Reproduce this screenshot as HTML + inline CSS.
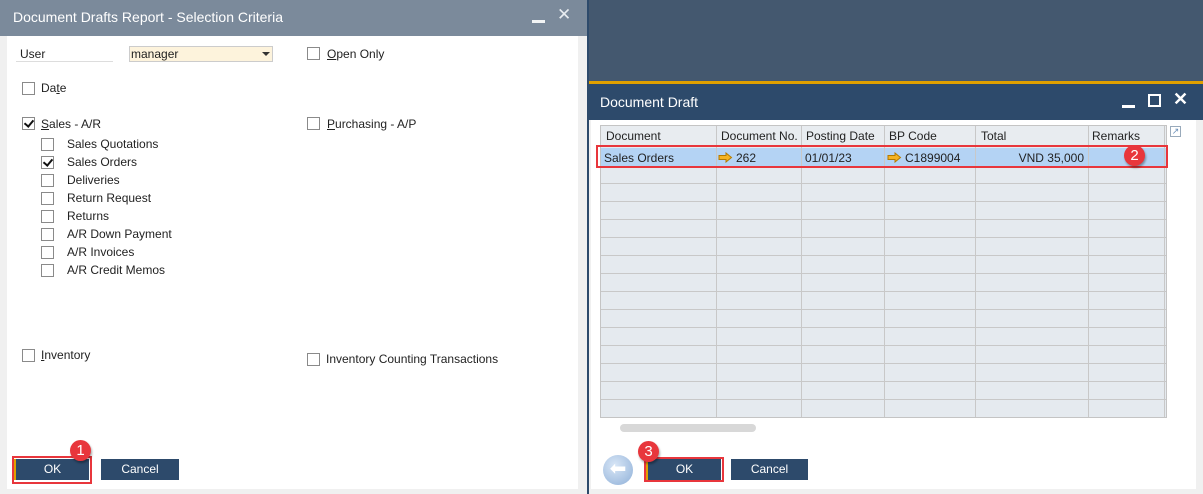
<!DOCTYPE html>
<html><head><meta charset="utf-8"><style>
*{margin:0;padding:0;box-sizing:border-box}
body{width:1203px;height:494px;position:relative;overflow:hidden;font-family:"Liberation Sans",sans-serif;font-size:12px;color:#222;background:#f0f0f0}
.a{position:absolute;white-space:nowrap}
.cb{position:absolute;width:13px;height:13px;border:1px solid #8a8a8a;background:#fff}
.ck::after{content:"";position:absolute;left:3px;top:0px;width:4px;height:7px;border:solid #111;border-width:0 2px 2px 0;transform:rotate(40deg)}
.lbl{position:absolute;white-space:nowrap;font-size:12px}
.btn{position:absolute;background:#2d4a6b;color:#fff;text-align:center;font-size:12px;line-height:21px;height:21px}
.badge{position:absolute;width:21px;height:21px;border-radius:50%;background:#e8363c;color:#fff;font-size:15px;text-align:center;line-height:21px;box-shadow:1px 2px 2px rgba(0,0,0,.35)}
.red{position:absolute;border:2px solid #e8363c}
.hl{position:absolute;top:0;height:100%;width:1px;background:#c8c8c8}
</style></head><body>
<!-- left window -->
<div class="a" style="left:0;top:0;width:587px;height:36px;background:#7b8a9b"></div>
<div class="a" style="left:13px;top:9px;color:#fff;font-size:14px">Document Drafts Report - Selection Criteria</div>
<div class="a" style="left:532px;top:20px;width:13px;height:3px;background:#fff;opacity:.9"></div>
<div class="a" style="left:557px;top:5px;color:#e8ecf0;font-size:17px">✕</div>
<div class="a" style="left:7px;top:36px;width:571px;height:453px;background:#fff"></div>
<div class="a" style="left:587px;top:0;width:2px;height:494px;background:#2d4a6b"></div>
<div class="lbl" style="left:20px;top:47px">User</div>
<div class="a" style="left:16px;top:61px;width:97px;height:1px;background:#ddd"></div>
<div class="a" style="left:129px;top:46px;width:144px;height:16px;background:#fdf3dc;border:1px solid #ccc"></div>
<div class="lbl" style="left:131px;top:47px">manager</div>
<div class="a" style="left:262px;top:52px;width:0;height:0;border-left:4px solid transparent;border-right:4px solid transparent;border-top:4px solid #333"></div>
<div class="cb" style="left:307px;top:47px"></div><div class="lbl" style="left:327px;top:47px"><u>O</u>pen Only</div>
<div class="cb" style="left:22px;top:82px"></div><div class="lbl" style="left:41px;top:81px">Da<u>t</u>e</div>
<div class="cb ck" style="left:22px;top:117px"></div><div class="lbl" style="left:41px;top:117px"><u>S</u>ales - A/R</div>
<div class="cb" style="left:307px;top:117px"></div><div class="lbl" style="left:327px;top:117px"><u>P</u>urchasing - A/P</div>
<div class="cb" style="left:41px;top:138px"></div><div class="lbl" style="left:67px;top:137px">Sales Quotations</div>
<div class="cb ck" style="left:41px;top:156px"></div><div class="lbl" style="left:67px;top:155px">Sales Orders</div>
<div class="cb" style="left:41px;top:174px"></div><div class="lbl" style="left:67px;top:173px">Deliveries</div>
<div class="cb" style="left:41px;top:192px"></div><div class="lbl" style="left:67px;top:191px">Return Request</div>
<div class="cb" style="left:41px;top:210px"></div><div class="lbl" style="left:67px;top:209px">Returns</div>
<div class="cb" style="left:41px;top:228px"></div><div class="lbl" style="left:67px;top:227px">A/R Down Payment</div>
<div class="cb" style="left:41px;top:246px"></div><div class="lbl" style="left:67px;top:245px">A/R Invoices</div>
<div class="cb" style="left:41px;top:264px"></div><div class="lbl" style="left:67px;top:263px">A/R Credit Memos</div>
<div class="cb" style="left:22px;top:349px"></div><div class="lbl" style="left:41px;top:348px"><u>I</u>nventory</div>
<div class="cb" style="left:307px;top:353px"></div><div class="lbl" style="left:326px;top:352px">Inventory Counting Transactions</div>
<div class="btn" style="left:14px;top:459px;width:75px;border-left:2px solid #e0a000">OK</div>
<div class="red" style="left:12px;top:456px;width:80px;height:28px"></div>
<div class="btn" style="left:101px;top:459px;width:78px">Cancel</div>
<div class="badge" style="left:70px;top:440px">1</div>
<!-- right side -->
<div class="a" style="left:589px;top:0;width:614px;height:81px;background:#44586f"></div>
<div class="a" style="left:589px;top:81px;width:614px;height:3px;background:#e0a000"></div>
<div class="a" style="left:589px;top:84px;width:614px;height:36px;background:#2d4a6b"></div>
<div class="a" style="left:600px;top:94px;color:#fff;font-size:14px">Document Draft</div>
<div class="a" style="left:1122px;top:105px;width:13px;height:3px;background:#fff"></div>
<div class="a" style="left:1148px;top:94px;width:13px;height:13px;border:2px solid #fff"></div>
<div class="a" style="left:1173px;top:89px;color:#fff;font-size:18px;font-weight:bold">✕</div>
<div class="a" style="left:591px;top:120px;width:605px;height:369px;background:#fff"></div>
<!-- grid -->
<div class="a" style="left:600px;top:125px;width:567px;height:293px;background:#e5eaef;border:1px solid #c4c4c4;background-image:repeating-linear-gradient(to bottom,transparent 0,transparent 17px,#c8c8c8 17px,#c8c8c8 18px);background-position:0 40px;overflow:hidden">
<div class="a" style="left:0;top:0;width:567px;height:21px;background:#e8ecf0;border-bottom:1px solid #c4c4c4"></div>
<div class="a" style="left:0;top:22px;width:567px;height:19px;background:#b4d3f4"></div>
<div class="hl" style="left:115px"></div><div class="hl" style="left:200px"></div><div class="hl" style="left:283px"></div><div class="hl" style="left:374px"></div><div class="hl" style="left:487px"></div><div class="hl" style="left:563px"></div>
<div class="a" style="left:5px;top:3px">Document</div>
<div class="a" style="left:120px;top:3px">Document No.</div>
<div class="a" style="left:205px;top:3px">Posting Date</div>
<div class="a" style="left:288px;top:3px">BP Code</div>
<div class="a" style="left:380px;top:3px">Total</div>
<div class="a" style="left:491px;top:3px">Remarks</div>
<div class="a" style="left:3px;top:25px">Sales Orders</div>
<svg class="a" style="left:117px;top:26px" width="15" height="11" viewBox="0 0 15 11"><path d="M1 3.5h7V1l5.5 4.5L8 10V7.5H1z" fill="#f5b321" stroke="#b37a00" stroke-width="1"/></svg>
<div class="a" style="left:135px;top:25px">262</div>
<div class="a" style="left:204px;top:25px">01/01/23</div>
<svg class="a" style="left:286px;top:26px" width="15" height="11" viewBox="0 0 15 11"><path d="M1 3.5h7V1l5.5 4.5L8 10V7.5H1z" fill="#f5b321" stroke="#b37a00" stroke-width="1"/></svg>
<div class="a" style="left:304px;top:25px">C1899004</div>
<div class="a" style="left:380px;top:25px;width:103px;text-align:right">VND 35,000</div>
</div>
<div class="a" style="left:1170px;top:126px;width:11px;height:11px;border:1px solid #9ab;color:#6a8fb8;font-size:9px;line-height:9px;text-align:center">↗</div>
<div class="red" style="left:596px;top:145px;width:572px;height:23px"></div>
<div class="badge" style="left:1124px;top:145px">2</div>
<div class="a" style="left:620px;top:424px;width:136px;height:8px;border-radius:4px;background:#d8d8d8"></div>
<div class="a" style="left:603px;top:455px;width:30px;height:30px;border-radius:50%;background:radial-gradient(circle at 40% 35%,#d8e6f6,#8fb0d8);color:#fff;font-size:20px;line-height:28px;text-align:center">⬅</div>
<div class="btn" style="left:646px;top:459px;width:75px;border-left:2px solid #e0a000">OK</div>
<div class="red" style="left:644px;top:457px;width:80px;height:25px"></div>
<div class="btn" style="left:731px;top:459px;width:77px">Cancel</div>
<div class="badge" style="left:638px;top:441px">3</div>
</body></html>
